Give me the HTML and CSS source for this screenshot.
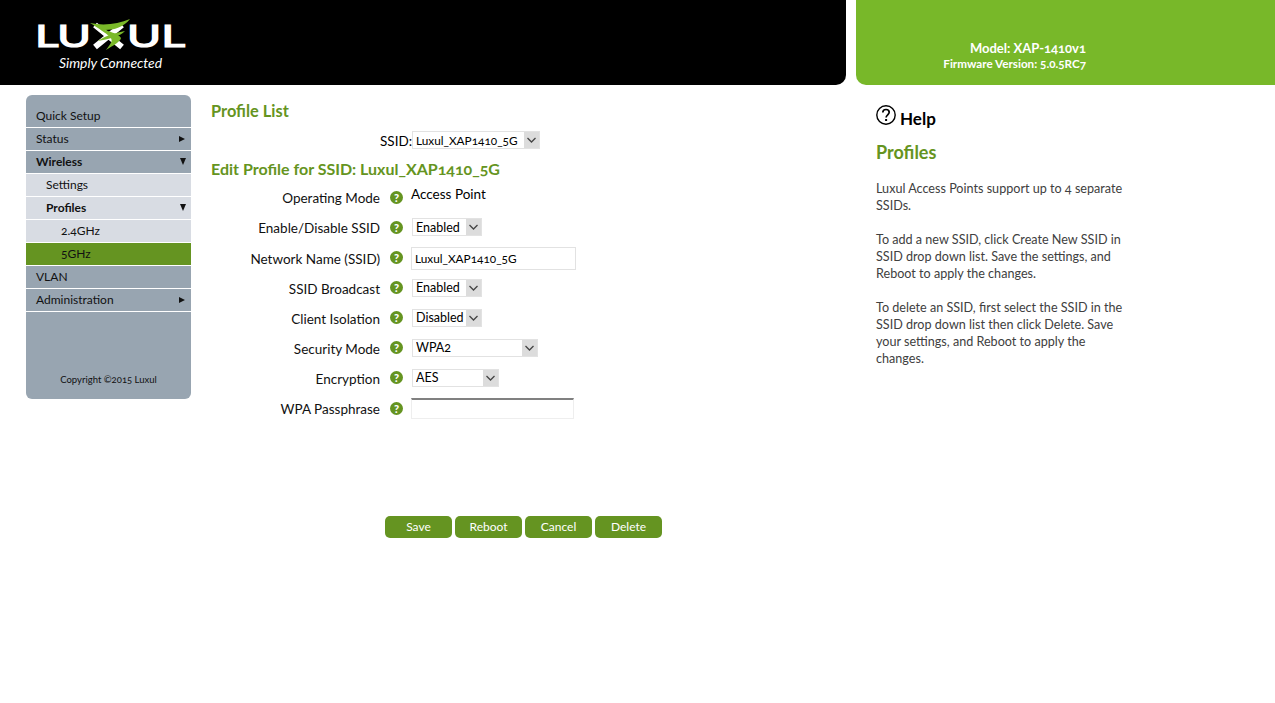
FILE: index.html
```html
<!DOCTYPE html>
<html lang="en">
<head>
<meta charset="utf-8">
<title>Luxul XAP-1410</title>
<link rel="stylesheet" href="styles.css">
</head>
<body>
<header class="top">
  <div class="brand">
    <svg class="logo" width="165" height="60" viewBox="0 0 165 60">
      <text class="logo-word" x="3" y="32" textLength="56" lengthAdjust="spacingAndGlyphs">LU</text>
      <path class="x-white" d="M63 10l27 22M90 10L63 32"/>
      <path class="x-green" d="M58 8C72 11 86 9 98 4 92 12 82 15 73 15 83 18 92 22 88 25 84 30 78 32 74 35 78 29 82 26 78 22 74 18 66 13 58 8z"/>
      <path class="x-green" d="M66 26C74 20 84 18 93 16 88 22 76 24 66 26z"/>
      <text class="logo-word" x="95" y="32" textLength="58" lengthAdjust="spacingAndGlyphs">UL</text>
      <text class="logo-tag" x="27" y="53" textLength="103" lengthAdjust="spacingAndGlyphs">Simply Connected</text>
    </svg>
  </div>
  <div class="model">
    <div class="model-name">Model: XAP-1410v1</div>
    <div class="firmware">Firmware Version: 5.0.5RC7</div>
  </div>
</header>

<div class="page">
  <nav class="side">
    <a class="item first">Quick Setup</a>
    <a class="item">Status<i class="arrow right"></i></a>
    <a class="item strong">Wireless<i class="arrow down"></i></a>
    <a class="item sub">Settings</a>
    <a class="item sub strong">Profiles<i class="arrow down"></i></a>
    <a class="item subsub">2.4GHz</a>
    <a class="item subsub active">5GHz</a>
    <a class="item">VLAN</a>
    <a class="item">Administration<i class="arrow right"></i></a>
    <div class="copyright">Copyright ©2015 Luxul</div>
  </nav>

  <main class="main">
    <h2 class="heading first-heading">Profile List</h2>
    <div class="ssid-row">
      <label class="ssid-label">SSID:</label>
      <select class="ctl w128 small"><option>Luxul_XAP1410_5G</option></select>
    </div>
    <h2 class="heading second">Edit Profile for SSID: Luxul_XAP1410_5G</h2>
    <div class="form">
      <div class="row"><label>Operating Mode</label><span class="q">?</span><span class="static">Access Point</span></div>
      <div class="row"><label>Enable/Disable SSID</label><span class="q">?</span><select class="ctl w70"><option>Enabled</option></select></div>
      <div class="row"><label>Network Name (SSID)</label><span class="q">?</span><input class="text w165" type="text" value="Luxul_XAP1410_5G"></div>
      <div class="row"><label>SSID Broadcast</label><span class="q">?</span><select class="ctl w70"><option>Enabled</option></select></div>
      <div class="row"><label>Client Isolation</label><span class="q">?</span><select class="ctl w70"><option>Disabled</option></select></div>
      <div class="row"><label>Security Mode</label><span class="q">?</span><select class="ctl w126"><option>WPA2</option></select></div>
      <div class="row"><label>Encryption</label><span class="q">?</span><select class="ctl w87"><option>AES</option></select></div>
      <div class="row"><label>WPA Passphrase</label><span class="q">?</span><input class="pass" type="password"></div>
    </div>
    <div class="buttons">
      <button class="btn" type="button">Save</button>
      <button class="btn" type="button">Reboot</button>
      <button class="btn" type="button">Cancel</button>
      <button class="btn" type="button">Delete</button>
    </div>
  </main>

  <aside class="help">
    <div class="help-title">
      <svg class="help-icon" width="20" height="20" viewBox="0 0 20 20">
        <circle cx="10" cy="10" r="9.200" fill="none" stroke="#000" stroke-width="1.400"/>
        <path d="M6.800 7.600C6.800 5.600 8.200 4.500 10 4.500c1.900 0 3.200 1.100 3.200 2.800 0 2.400-3.100 2.600-3.100 5.200" fill="none" stroke="#000" stroke-width="1.700"/>
        <rect x="9.100" y="14" width="2" height="2" fill="#000"/>
      </svg>
      <span>Help</span>
    </div>
    <h2 class="heading help-heading">Profiles</h2>
    <p>Luxul Access Points support up to 4 separate SSIDs.</p>
    <p>To add a new SSID, click Create New SSID in SSID drop down list. Save the settings, and Reboot to apply the changes.</p>
    <p>To delete an SSID, first select the SSID in the SSID drop down list then click Delete. Save your settings, and Reboot to apply the changes.</p>
  </aside>
</div>
</body>
</html>
```
FILE: styles.css
```css
* { box-sizing: border-box; }
html, body { margin: 0; padding: 0; background: #fff; }
body {
  font-family: "Lato", "Open Sans", sans-serif;
  font-variant-numeric: oldstyle-nums;
  color: #000;
  overflow: hidden;
  height: 703px;
}
.top { display: flex; gap: 10px; height: 85px; }
.brand { width: 846px; background: #000; border-bottom-right-radius: 10px; padding: 15px 0 0 32px; }
.logo { display: block; }
.logo-word { font-family: "Lato", sans-serif; font-size: 30px; font-weight: 400; fill: #fff; stroke: #fff; stroke-width: 1.200px; }
.x-white { fill: none; stroke: #fff; stroke-width: 6px; }
.x-green { fill: #7ab929; }
.logo-tag { font-family: "Lato", sans-serif; font-style: italic; font-size: 13px; fill: #fff; }
.model {
  flex: 1; background: #78b829; border-bottom-left-radius: 10px; color: #fff;
  padding-top: 40px;
}
.model-name, .firmware { width: 230px; text-align: right; }
.model-name { font-size: 13px; font-weight: 700; line-height: 16px; }
.firmware { font-size: 11.700px; font-weight: 700; line-height: 15px; }

.page { display: flex; padding: 10px 0 0 26px; }
.side {
  width: 165px; height: 304px; background: #98a5b1; border-radius: 6px;
  display: flex; flex-direction: column; flex: none;
}
.item {
  display: flex; align-items: center; height: 23px; padding: 0 6px 1px 10px;
  font-size: 12px; color: #111; border-bottom: 1px solid #fff; justify-content: space-between;
}
.item.first { height: 33px; padding-top: 9px; }
.item.strong { font-weight: 700; }
.item.sub { background: #d8dce3; padding-left: 20px; }
.item.subsub { background: #d8dce3; padding-left: 35px; }
.item.active { background: #659421; }
.arrow { display: block; width: 0; height: 0; border-style: solid; }
.arrow.right { border-width: 3.500px 0 3.500px 6px; border-color: transparent transparent transparent #111; }
.arrow.down { border-width: 7px 3.500px 0 3.500px; border-color: #111 transparent transparent transparent; margin-right: -1px; }
.copyright { margin-top: 62px; text-align: center; font-size: 9.500px; color: #111; }

.main { width: 635px; margin-left: 20px; flex: none; padding-top: 5px; }
.heading { margin: 0; font-size: 16px; font-weight: 700; color: #659421; line-height: 22px; }
.first-heading { font-size: 16.400px; }
.heading.second { margin-top: 8px; }
.ssid-row { display: flex; align-items: center; height: 20px; padding-left: 169px; margin-top: 8px; }
.ssid-label { font-size: 13.500px; width: 32px; text-align: right; padding-top: 2px; }
.ctl {
  appearance: none; -webkit-appearance: none; height: 18px; border: 1px solid #e2e2e2;
  border-radius: 0; font: inherit; font-size: 12.500px; color: #000; padding: 0 0 0 3px; margin: 0;
  background-color: #fff;
  background-image: url("data:image/svg+xml,%3Csvg xmlns='http://www.w3.org/2000/svg' width='15' height='16'%3E%3Crect width='15' height='16' fill='%23dcdcdc'/%3E%3Cpath d='M3.500 6l4 4 4-4' fill='none' stroke='%23444' stroke-width='1.300'/%3E%3C/svg%3E");
  background-repeat: no-repeat; background-position: right center;
}
.small { font-size: 11.800px; }
.w128 { width: 128px; }
.w70 { width: 70px; }
.w126 { width: 126px; }
.w87 { width: 87px; }
.form { margin-top: 2.300px; }
.row { display: grid; grid-template-columns: 169px 32px auto; justify-content: start; align-items: center; height: 30.100px; }
.row label { text-align: right; font-size: 13.500px; color: #111; padding-top: 2px; white-space: nowrap; }
.q {
  justify-self: center; width: 13px; height: 13px; border-radius: 50%; background: #659421; color: #fff;
  font-size: 11px; font-weight: 900; line-height: 13px; text-align: center; margin-left: 1px;
}
.static { font-size: 13.500px; padding-bottom: 6px; margin-left: -1px; }
.text {
  height: 23px; border: 1px solid #e2e2e2; font: inherit; font-size: 11.800px; padding: 2px 3px; margin: 1px 0 0 -1px; color: #000; outline: none;
}
.w165 { width: 165px; }
.pass {
  width: 163px; height: 21px; border: 1px solid #eee; border-top: 2px solid #808080; padding: 0; margin: 0 0 0 -1px; background: #fff; outline: none;
}
.buttons { display: flex; gap: 3px; margin: 92.700px 0 0 174px; }
.btn {
  width: 67px; height: 22px; background: #659421; border: 0; border-radius: 5px; color: #fff;
  font: inherit; font-size: 12px; padding: 0;
}
.help { margin-left: 30px; width: 250px; padding-top: 9px; flex: none; }
.help-title { display: flex; align-items: flex-start; gap: 4px; height: 26px; font-size: 17px; font-weight: 700; color: #000; }
.help-title span { padding-top: 4px; }
.help-icon { display: block; flex: none; margin-top: 1px; }
.help-heading { margin-top: 11px; font-size: 18px; }
.help p { margin: 0 0 17px; font-size: 12.600px; line-height: 17px; color: #404040; }
.help-heading + p { margin-top: 17px; }
```
